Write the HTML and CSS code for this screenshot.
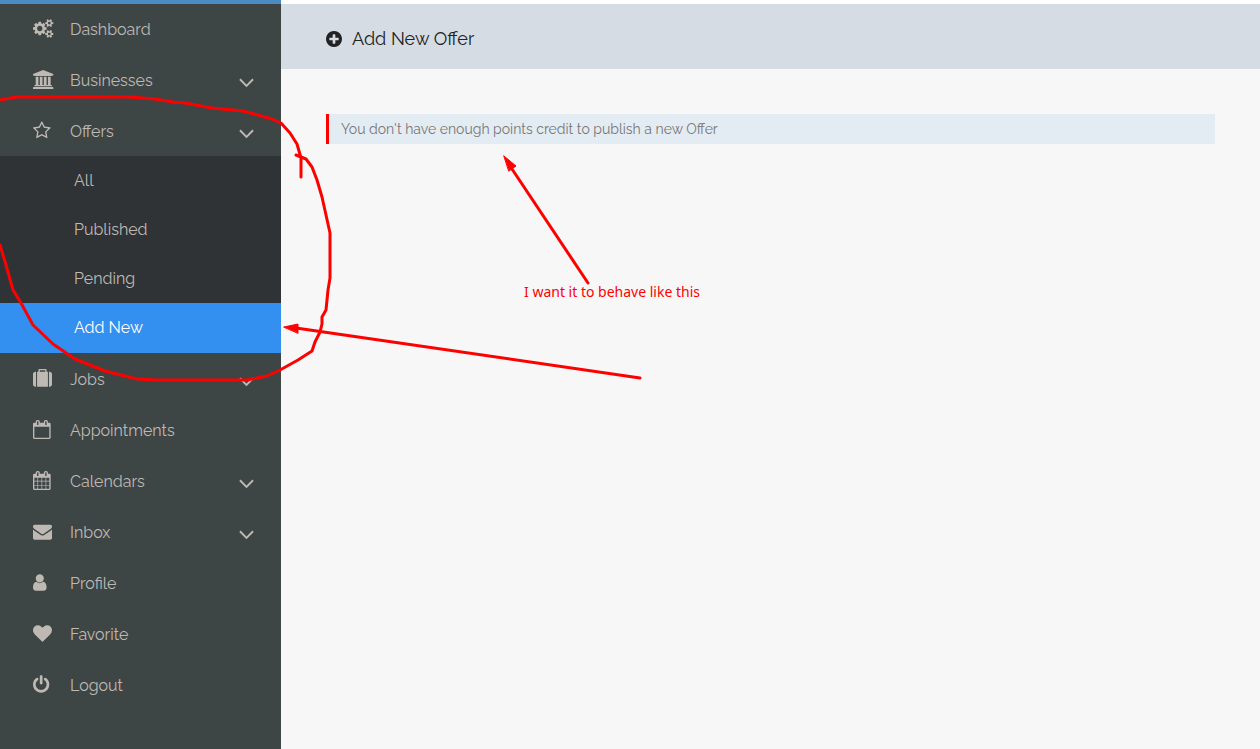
FILE: index.html
```
<!DOCTYPE html>
<html lang="en">

<head>
    <meta charset="UTF-8">
    <meta name="viewport" content="width=device-width, initial-scale=1.0">
    <title>Add New Offer</title>
    <link rel="stylesheet" href="styles.css">
</head>

<body>
    <div class="page">
        <nav class="sidebar">
            <ul class="menu">
                <li>
                    <a href="#">
                        <svg class="icon" viewBox="0 0 1792 1792"><path d="M896 896q0-106-75-181t-181-75-181 75-75 181 75 181 181 75 181-75 75-181zm768 512q0-52-38-90t-90-38-90 38-38 90q0 53 37.500 90.500t90.500 37.500 90.500-37.500 37.500-90.500zm0-1024q0-52-38-90t-90-38-90 38-38 90q0 53 37.500 90.500t90.500 37.500 90.500-37.500 37.500-90.500zm-384 421v185q0 10-7 19.500t-16 10.500l-155 24q-11 35-32 76 34 48 90 115 7 11 7 20 0 12-7 19-23 30-82.500 89.500t-78.500 59.500q-11 0-21-7l-115-90q-37 19-77 31-11 108-23 155-7 24-30 24h-186q-11 0-20-7.500t-10-17.500l-23-153q-34-10-75-31l-118 89q-7 7-20 7-11 0-21-8-144-133-144-160 0-9 7-19 10-14 41-53t47-61q-23-44-35-82l-152-24q-10-1-17-9.500t-7-19.500v-185q0-10 7-19.500t16-10.500l155-24q11-35 32-76-34-48-90-115-7-11-7-20 0-12 7-20 22-30 82-89t79-59q11 0 21 7l115 90q34-18 77-32 11-108 23-154 7-24 30-24h186q11 0 20 7.500t10 17.500l23 153q34 10 75 31l118-89q8-7 20-7 11 0 21 8 144 133 144 160 0 8-7 19-12 16-42 54t-45 60q23 48 34 82l152 23q10 2 17 10.500t7 19.500zm640 533v140q0 16-149 31-12 27-30 52 51 113 51 138 0 4-4 7-122 71-124 71-8 0-46-47t-52-68q-20 2-30 2t-30-2q-14 21-52 68t-46 47q-2 0-124-71-4-3-4-7 0-25 51-138-18-25-30-52-149-15-149-31v-140q0-16 149-31 13-29 30-52-51-113-51-138 0-4 4-7 4-2 35-20t59-34 30-16q8 0 46 46.500t52 67.500q20-2 30-2t30 2q51-71 92-112l6-2q4 0 124 70 4 3 4 7 0 25-51 138 17 23 30 52 149 15 149 31zm0-1024v140q0 16-149 31-12 27-30 52 51 113 51 138 0 4-4 7-122 71-124 71-8 0-46-47t-52-68q-20 2-30 2t-30-2q-14 21-52 68t-46 47q-2 0-124-71-4-3-4-7 0-25 51-138-18-25-30-52-149-15-149-31v-140q0-16 149-31 13-29 30-52-51-113-51-138 0-4 4-7 4-2 35-20t59-34 30-16q8 0 46 46.500t52 67.500q20-2 30-2t30 2q51-71 92-112l6-2q4 0 124 70 4 3 4 7 0 25-51 138 17 23 30 52 149 15 149 31z"/></svg>
                        <span>Dashboard</span>
                    </a>
                </li>
                <li>
                    <a href="#">
                        <svg class="icon" viewBox="0 0 1792 1792"><path d="M960 0l960 384v128h-128q0 26-20.500 45t-48.500 19h-1526q-28 0-48.500-19t-20.500-45h-128v-128zm-704 640h256v768h128v-768h256v768h128v-768h256v768h128v-768h256v768h59q28 0 48.500 19t20.500 45v64h-1664v-64q0-26 20.500-45t48.500-19h59v-768zm1595 960q28 0 48.500 19t20.500 45v128h-1920v-128q0-26 20.500-45t48.500-19h1782z"/></svg>
                        <span>Businesses</span>
                        <svg class="arrow" viewBox="0 0 16 10"><path d="M1 1l7 7 7-7"/></svg>
                    </a>
                </li>
                <li>
                    <a href="#">
                        <svg class="icon" viewBox="64 0 1792 1792"><path d="M1201 1004l306-297-422-62-189-382-189 382-422 62 306 297-73 421 378-199 377 199zm527-357q0 22-26 48l-363 354 86 500q1 7 1 20 0 50-41 50-19 0-40-12l-449-236-449 236q-22 12-40 12-21 0-31.500-14.500t-10.500-35.500q0-6 2-20l86-500-364-354q-25-27-25-48 0-37 56-46l502-73 225-455q19-41 49-41t49 41l225 455 502 73q56 9 56 46z"/></svg>
                        <span>Offers</span>
                        <svg class="arrow" viewBox="0 0 16 10"><path d="M1 1l7 7 7-7"/></svg>
                    </a>
                    <ul class="submenu">
                        <li><a href="#">All</a></li>
                        <li><a href="#">Published</a></li>
                        <li><a href="#">Pending</a></li>
                        <li><a href="#" class="active">Add New</a></li>
                    </ul>
                </li>
                <li>
                    <a href="#">
                        <svg class="icon" viewBox="0 0 1792 1792"><path d="M640 256h512v-128h-512v128zm-352 0v1408h-64q-92 0-158-66t-66-158v-960q0-92 66-158t158-66h64zm1120 0v1408h-1024v-1408h128v-160q0-40 28-68t68-28h576q40 0 68 28t28 68v160h128zm384 224v960q0 92-66 158t-158 66h-64v-1408h64q92 0 158 66t66 158z"/></svg>
                        <span>Jobs</span>
                        <svg class="arrow" viewBox="0 0 16 10"><path d="M1 1l7 7 7-7"/></svg>
                    </a>
                </li>
                <li>
                    <a href="#">
                        <svg class="icon" viewBox="64 0 1792 1792"><path d="M192 1664h1408v-1024h-1408v1024zm384-1216v-288q0-14-9-23t-23-9h-64q-14 0-23 9t-9 23v288q0 14 9 23t23 9h64q14 0 23-9t9-23zm768 0v-288q0-14-9-23t-23-9h-64q-14 0-23 9t-9 23v288q0 14 9 23t23 9h64q14 0 23-9t9-23zm384-64v1280q0 52-38 90t-90 38h-1408q-52 0-90-38t-38-90v-1280q0-52 38-90t90-38h128v-96q0-66 47-113t113-47h64q66 0 113 47t47 113v96h384v-96q0-66 47-113t113-47h64q66 0 113 47t47 113v96h128q52 0 90 38t38 90z"/></svg>
                        <span>Appointments</span>
                    </a>
                </li>
                <li>
                    <a href="#">
                        <svg class="icon" viewBox="64 0 1792 1792"><path d="M192 1664h288v-288h-288v288zm352 0h320v-288h-320v288zm-352-352h288v-320h-288v320zm352 0h320v-320h-320v320zm-352-384h288v-288h-288v288zm736 736h320v-288h-320v288zm-384-736h320v-288h-320v288zm768 736h288v-288h-288v288zm-384-352h320v-320h-320v320zm-352-864v-288q0-13-9.500-22.500t-22.500-9.500h-64q-13 0-22.500 9.500t-9.500 22.500v288q0 13 9.500 22.500t22.500 9.500h64q13 0 22.500-9.500t9.500-22.500zm736 864h288v-320h-288v320zm-384-384h320v-288h-320v288zm384 0h288v-288h-288v288zm32-480v-288q0-13-9.500-22.500t-22.500-9.500h-64q-13 0-22.500 9.500t-9.500 22.500v288q0 13 9.500 22.500t22.500 9.500h64q13 0 22.500-9.500t9.500-22.500zm384-64v1280q0 52-38 90t-90 38h-1408q-52 0-90-38t-38-90v-1280q0-52 38-90t90-38h128v-96q0-66 47-113t113-47h64q66 0 113 47t47 113v96h384v-96q0-66 47-113t113-47h64q66 0 113 47t47 113v96h128q52 0 90 38t38 90z"/></svg>
                        <span>Calendars</span>
                        <svg class="arrow" viewBox="0 0 16 10"><path d="M1 1l7 7 7-7"/></svg>
                    </a>
                </li>
                <li>
                    <a href="#">
                        <svg class="icon" viewBox="0 0 1792 1792"><path d="M1792 710v794q0 66-47 113t-113 47h-1472q-66 0-113-47t-47-113v-794q44 49 101 87 362 246 497 345 57 42 92.500 65.500t94.500 48 110 24.500h2q51 0 110-24.500t94.500-48 92.500-65.500q170-123 498-345 57-39 100-87zm0-294q0 79-49 151t-122 123q-376 261-468 325-10 7-42.500 30.500t-54 38-52 32.500-57.500 27-50 9h-2q-23 0-50-9t-57.500-27-52-32.500-54-38-42.500-30.500q-91-64-262-182.500t-205-142.500q-62-42-117-115.500t-55-136.500q0-78 41.500-130t118.500-52h1472q65 0 112.500 47t47.500 113z"/></svg>
                        <span>Inbox</span>
                        <svg class="arrow" viewBox="0 0 16 10"><path d="M1 1l7 7 7-7"/></svg>
                    </a>
                </li>
                <li>
                    <a href="#">
                        <svg class="icon" viewBox="256 0 1792 1792"><path d="M1536 1399q0 109-62.500 187t-150.500 78h-854q-88 0-150.500-78t-62.500-187q0-85 8.500-160.500t31.500-152 58.500-131 94-89 134.500-34.500q131 128 313 128t313-128q76 0 134.500 34.500t94 89 58.500 131 31.500 152 8.500 160.500zm-256-887q0 159-112.500 271.500t-271.500 112.500-271.500-112.500-112.500-271.500 112.500-271.500 271.500-112.500 271.500 112.500 112.500 271.500z"/></svg>
                        <span>Profile</span>
                    </a>
                </li>
                <li>
                    <a href="#">
                        <svg class="icon" viewBox="0 0 1792 1792"><path d="M896 1664q-26 0-44-18l-624-602q-10-8-27.500-26t-55.500-65.500-68-97.500-53.500-121-23.500-138q0-220 127-344t351-124q62 0 126.500 21.500t120 58 95.500 68.500 76 68q36-36 76-68t95.500-68.500 120-58 126.500-21.500q224 0 351 124t127 344q0 221-229 450l-623 600q-18 18-44 18z"/></svg>
                        <span>Favorite</span>
                    </a>
                </li>
                <li>
                    <a href="#">
                        <svg class="icon" viewBox="128 0 1792 1792"><path d="M1664 896q0 156-61 298t-164 245-245 164-298 61-298-61-245-164-164-245-61-298q0-182 80.500-343t226.500-270q43-32 95.500-25t83.500 50q32 42 24.500 94.500t-49.500 84.500q-98 74-151.500 181t-53.500 228q0 104 40.500 198.500t109.500 163.500 163.500 109.500 198.500 40.500 198.500-40.500 163.500-109.500 109.500-163.500 40.500-198.500q0-121-53.500-228t-151.500-181q-42-32-49.500-84.500t24.500-94.500q31-43 84-50t95 25q146 109 226.500 270t80.500 343zm-640-768v640q0 52-38 90t-90 38-90-38-38-90v-640q0-52 38-90t90-38 90 38 38 90z"/></svg>
                        <span>Logout</span>
                    </a>
                </li>
            </ul>
        </nav>

        <main>
            <header class="title-bar">
                <svg class="plus" viewBox="128 128 1536 1536"><path d="M1344 960v-128q0-26-19-45t-45-19h-256v-256q0-26-19-45t-45-19h-128q-26 0-45 19t-19 45v256h-256q-26 0-45 19t-19 45v128q0 26 19 45t45 19h256v256q0 26 19 45t45 19h128q26 0 45-19t19-45v-256h256q26 0 45-19t19-45zm320-64q0 209-103 385.500t-279.500 279.500-385.500 103-385.500-103-279.500-279.500-103-385.500 103-385.500 279.500-279.500 385.500-103 385.500 103 279.500 279.500 103 385.500z"/></svg>
                <h1>Add New Offer</h1>
            </header>
            <p class="notice">You don't have enough points credit to publish a new Offer</p>
        </main>
    </div>

    <!-- red pen marks over the page -->
    <div class="markup">
        <svg class="pen" width="660" height="400" viewBox="0 0 660 400">
            <path d="M0 100L16 97H130L155 99L173 102L185 103L212 108L243 111L258 115L272 119L281 123L290 133L297 144L301 158V177"/>
            <path d="M296 155L306 159L312 167L317 180L322 197L326 215L330 233V278L328 290L326 310L322 317V324L320 332L315 342L312 351L298 360L280 370L267 376L247 380H157L137 379L105 371L75 359L53 344L33 325L21 303L13 290L6 265L0 245"/>
            <path d="M588 283L510 166M640 378L296 328"/>
            <path class="tip" d="M504 156l12 10-7 5zM284 327l14-3v9z"/>
        </svg>
        <p class="note">I want it to behave like this</p>
    </div>
</body>

</html>
```
FILE: styles.css
```
* {
    box-sizing: border-box;
    margin: 0;
    padding: 0;
}

body {
    font-family: Raleway, Lato, sans-serif;
    font-size: 16px;
    background: #f7f7f7;
    position: relative;
}

a {
    text-decoration: none;
    color: #bfb9b4;
}

ul {
    list-style: none;
}

.page {
    display: flex;
    min-height: 100vh;
}

.sidebar {
    width: 281px;
    flex-shrink: 0;
    background: #3e4545;
    border-top: 4px solid #4a8bc2;
}

.menu>li {
    border-bottom: 1px solid #3e4545;
}

.menu>li>a {
    display: flex;
    align-items: center;
    height: 50px;
    padding: 0 27px 0 33px;
}

.icon {
    width: 19px;
    height: 19px;
    margin-right: 18px;
    margin-bottom: 2px;
    overflow: visible;
    fill: #bfb9b4;
}

.arrow {
    width: 15px;
    height: 10px;
    margin-left: auto;
    margin-top: 6px;
    fill: none;
    stroke: #bfb9b4;
    stroke-width: 2;
}

.submenu {
    background: #2f3335;
}

.submenu a {
    display: block;
    padding-left: 74px;
    line-height: 49px;
}

.submenu .active {
    background: #338ff0;
    color: white;
    padding-bottom: 1px;
}

main {
    flex: 1;
    border-top: 4px solid white;
}

.title-bar {
    display: flex;
    align-items: center;
    gap: 10px;
    height: 65px;
    padding: 4px 45px 0 45px;
    background: #d6dce3;
    color: #222;
}

.title-bar h1 {
    font-size: 18px;
    font-weight: 400;
}

.plus {
    width: 16px;
    height: 16px;
    fill: #222;
}

.notice {
    margin: 45px;
    padding-left: 12px;
    border-left: 3px solid red;
    background: #e4ecf3;
    color: #777;
    font-size: 14px;
    line-height: 30px;
}

.markup {
    position: absolute;
    top: 0;
    left: 0;
    pointer-events: none;
}

.pen {
    display: block;
    fill: none;
    stroke: red;
    stroke-width: 3;
    stroke-linecap: round;
    stroke-linejoin: round;
}

.pen .tip {
    fill: red;
    stroke-width: 1;
}

.note {
    position: absolute;
    top: 283px;
    left: 524px;
    color: red;
    font-family: "Noto Sans", sans-serif;
    font-size: 14px;
    line-height: 18px;
    white-space: nowrap;
}
```
